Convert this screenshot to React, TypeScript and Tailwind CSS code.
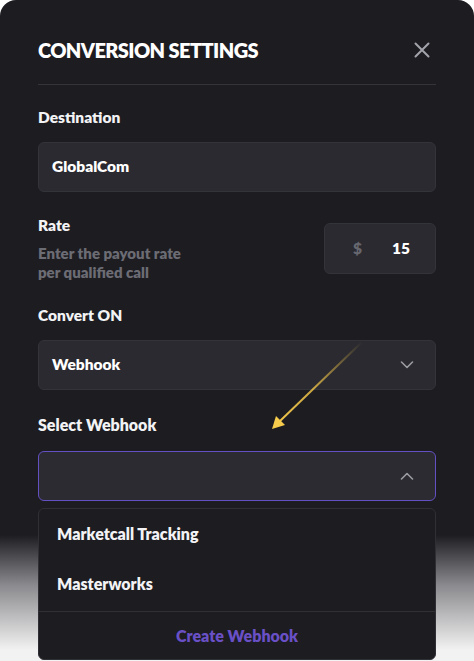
import React from "react";

function Chevron({ up }: { up?: boolean }) {
  return (
    <svg width="14" height="8" viewBox="0 0 14 8" fill="none" className="shrink-0">
      <polyline
        points={up ? "1.5,7 7,1.5 12.5,7" : "1.5,1 7,6.5 12.5,1"}
        stroke="#9c9ca4"
        strokeWidth="1.6"
        strokeLinecap="round"
        strokeLinejoin="round"
      />
    </svg>
  );
}

export default function App() {
  return (
    <div className="w-[474px] h-[661px] bg-white overflow-hidden" style={{ fontFamily: "Lato, 'Noto Sans', sans-serif" }}>
      <div className="relative h-[661px] rounded-t-[16px] px-[38px] bg-[linear-gradient(to_bottom,#1c1c21_0px,#1c1c21_535px,#8a8a8e_585px,#f2f2f2_650px)]">
        {/* header */}
        <div className="flex items-center justify-between pt-[38px] pb-[22px] border-b border-[#34343b]">
          <h1 className="text-[20px] leading-[24px] font-extrabold text-white tracking-[-0.6px]">CONVERSION SETTINGS</h1>
          <svg width="16" height="16" viewBox="0 0 16 16" className="mr-[6px]">
            <path d="M1.5 1.5 L14.5 14.5 M14.5 1.5 L1.5 14.5" stroke="#a3a3ab" strokeWidth="2" strokeLinecap="round" />
          </svg>
        </div>

        {/* Destination */}
        <div className="mt-[22px] text-[15.5px] leading-[20px] font-extrabold text-[#f3f3f5]">Destination</div>
        <div className="mt-[15px] h-[50px] rounded-[6px] bg-[#2a2a30] border border-[#33333a] flex items-center pl-[13px] text-[15.5px] font-extrabold text-white">
          GlobalCom
        </div>

        {/* Rate */}
        <div className="mt-[23px] flex items-start justify-between">
          <div>
            <div className="text-[15.5px] leading-[20px] font-extrabold text-[#f3f3f5]">Rate</div>
            <div className="mt-[9px] text-[15px] leading-[19px] font-extrabold text-[#6c6c74]">
              Enter the payout rate
              <br />
              per qualified call
            </div>
          </div>
          <div className="mt-[8px] w-[112px] h-[51px] rounded-[6px] bg-[#2a2a30] border border-[#33333a] flex items-center">
            <span className="ml-[28px] text-[15.5px] font-extrabold text-[#66666e]">$</span>
            <span className="ml-[30px] text-[15.5px] font-extrabold text-white">15</span>
          </div>
        </div>

        {/* Convert ON */}
        <div className="mt-[23px] text-[15.5px] leading-[20px] font-extrabold text-[#f3f3f5]">Convert ON</div>
        <div className="mt-[15px] h-[50px] rounded-[6px] bg-[#2a2a30] border border-[#33333a] flex items-center justify-between pl-[13px] pr-[21px] text-[15.5px] font-extrabold text-white">
          <span>Webhook</span>
          <Chevron />
        </div>

        {/* Select Webhook */}
        <div className="mt-[25px] text-[16px] leading-[20px] font-extrabold text-[#f3f3f5]">Select Webhook</div>
        <div className="mt-[16px] h-[50px] rounded-[6px] bg-[#2b2b31] border-[1.5px] border-[#6450c2] flex items-center justify-end pr-[21px]">
          <Chevron up />
        </div>

        {/* Dropdown menu */}
        <div className="mt-[7px] rounded-[6px] bg-[#1c1c21] border border-[#2f2f36] overflow-hidden">
          <div className="h-[50px] flex items-center pl-[18px] text-[16px] font-extrabold text-[#f3f3f5]">Marketcall Tracking</div>
          <div className="h-[50px] flex items-center pl-[18px] text-[16px] font-extrabold text-[#f3f3f5]">Masterworks</div>
          <div className="mt-[2px] border-t border-[#2f2f36] h-[48px] flex items-center justify-center text-[16px] font-extrabold text-[#6a50c6]">
            Create Webhook
          </div>
        </div>

        {/* annotation arrow */}
        <svg className="absolute left-0 top-0 pointer-events-none" width="474" height="661" viewBox="0 0 474 661">
          <defs>
            <linearGradient id="ag" x1="362" y1="342" x2="272" y2="428" gradientUnits="userSpaceOnUse">
              <stop offset="0" stopColor="#f6c84a" stopOpacity="0" />
              <stop offset="0.55" stopColor="#f6c84a" stopOpacity="0.8" />
              <stop offset="1" stopColor="#f7cb4b" stopOpacity="1" />
            </linearGradient>
          </defs>
          <line x1="362" y1="342" x2="280" y2="421" stroke="url(#ag)" strokeWidth="2" />
          <polygon points="272,429 276,416 285,425" fill="#f7cb4b" />
        </svg>
      </div>
    </div>
  );
}
